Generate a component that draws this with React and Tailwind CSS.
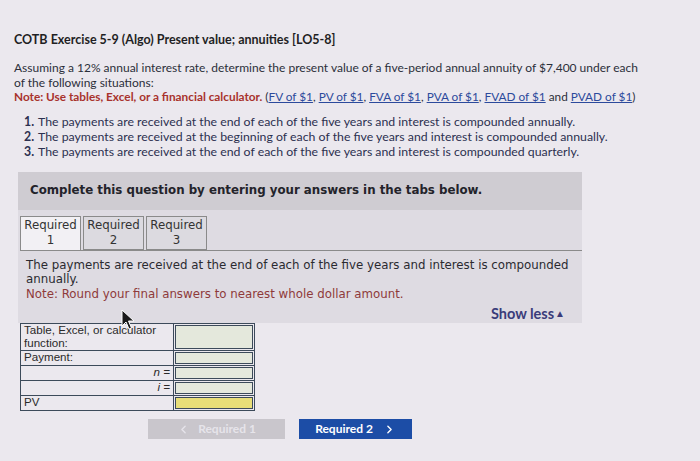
import { ChevronLeft, ChevronRight } from "lucide-react";

const links = ["FV of $1", "PV of $1", "FVA of $1", "PVA of $1", "FVAD of $1", "PVAD of $1"];

const situations = [
  "The payments are received at the end of each of the five years and interest is compounded annually.",
  "The payments are received at the beginning of each of the five years and interest is compounded annually.",
  "The payments are received at the end of each of the five years and interest is compounded quarterly.",
];

function Tab({ label, num, active }) {
  return (
    <div
      className={
        "w-[61px] h-[34px] border border-[#8a8a8a] flex flex-col items-center justify-center leading-[15px] text-[11.8px] text-[#333] " +
        (active ? "bg-[#f2f0f4] border-b-0" : "bg-[#dcdae0]")
      }
    >
      <span>{label}</span>
      <span>{num}</span>
    </div>
  );
}

function Row({ label, right, tall, yellow }) {
  return (
    <div className={"flex border-b border-[#3c4a5a] " + (tall ? "h-[27px]" : "h-[15px]")}>
      <div
        className={
          "w-[153px] border-r border-[#3c4a5a] px-[3px] leading-[12.5px] text-[11.6px] text-[#2a2a2a] " +
          (right ? "text-right italic" : "")
        }
      >
        {label}
      </div>
      <div className="flex-1 p-[1px]">
        <div className={"h-full border border-[#3c4a5a] " + (yellow ? "bg-[#e8de78]" : "bg-[#e4e8dc]")}></div>
      </div>
    </div>
  );
}

export default function App() {
  return (
    <div className="relative w-[700px] h-[461px] overflow-hidden bg-[#ebe8ee] font-['Lato',sans-serif]">
      <div className="pl-[14px] pt-[32px]">
        <h1 className="text-[12.5px] leading-[15px] font-bold text-[#1f1f24]">
          COTB Exercise 5-9 (Algo) Present value; annuities [LO5-8]
        </h1>

        <div className="mt-[14px] w-[642px] leading-[14.5px] text-[#2b2f3a]">
          <p className="text-[12px] w-[632px]">
            Assuming a 12% annual interest rate, determine the present value of a five-period annual annuity of $7,400 under each
            of the following situations:
          </p>
          <p className="text-[11.8px]">
            <span className="font-bold text-[#a8322c]">Note: Use tables, Excel, or a financial calculator.</span>{" "}
            (
            {links.map((l, i) => (
              <span key={l}>
                <span className="underline text-[#2c4a9c]">{l}</span>
                {i < links.length - 2 ? ", " : i === links.length - 2 ? " and " : ""}
              </span>
            ))}
            )
          </p>
        </div>

        <ol className="mt-[9px] ml-[10px] text-[12.3px] leading-[15px] text-[#2b3050]">
          {situations.map((s, i) => (
            <li key={i} className="flex gap-[4px]">
              <span className="font-bold w-[10px]">{i + 1}.</span>
              <span>{s}</span>
            </li>
          ))}
        </ol>
      </div>

      <div className="ml-[18px] mt-[13px] w-[564px] font-['DejaVu_Sans',sans-serif]">
        <div className="h-[38px] bg-[#cfccd2] flex items-center pl-[12px] text-[11.8px] font-bold text-[#23232a]">
          Complete this question by entering your answers in the tabs below.
        </div>
        <div className="bg-[#dedbe2] pt-[6px] pb-[1px]">
          <div className="ml-[2px] flex gap-[2px] border-b border-[#8a8a8a]">
            <Tab label="Required" num="1" active />
            <Tab label="Required" num="2" />
            <Tab label="Required" num="3" />
          </div>
          <div className="pl-[8px] pr-[3px] pt-[7px] text-[11.8px] leading-[14.5px] text-[#2a2a30]">
            <p>
              The payments are received at the end of each of the five years and interest is compounded annually.
            </p>
            <p className="text-[#8e3a3a]">Note: Round your final answers to nearest whole dollar amount.</p>
          </div>
          <div className="flex justify-end pr-[17px] mt-[4px] leading-[17px] font-['Lato',sans-serif] text-[14.5px] font-bold text-[#3a3c7a]">
            Show less<span className="text-[10px] ml-[1px] self-center">▲</span>
          </div>
        </div>
      </div>

      <div className="ml-[20px] w-[235px] border border-b-0 border-[#3c4a5a] font-['Liberation_Sans',sans-serif]">
        <Row label="Table, Excel, or calculator function:" tall />
        <Row label="Payment:" />
        <Row label="n =" right />
        <Row label="i =" right />
        <Row label="PV" yellow />
      </div>

      <div className="ml-[148px] mt-[8px] flex gap-[14px] font-['Lato',sans-serif] text-[12px] font-bold">
        <div className="w-[137px] h-[20px] bg-[#c9c6cc] text-[#e6e4ea] flex items-center justify-center gap-[8px]">
          <ChevronLeft size={13} strokeWidth={2.5} />
          <span>Required 1</span>
        </div>
        <div className="w-[113px] h-[20px] bg-[#1c4da6] text-white flex items-center justify-center gap-[10px]">
          <span>Required 2</span>
          <ChevronRight size={13} strokeWidth={2.5} />
        </div>
      </div>

      <svg className="absolute left-[121px] top-[309px]" width="14" height="22" viewBox="0 0 14 22">
        <path d="M1 1 L1 17 L5 13 L8 20 L10.5 19 L7.5 12 L13 12 Z" fill="#1a1a1a" stroke="#fff" strokeWidth="1" />
      </svg>
    </div>
  );
}
